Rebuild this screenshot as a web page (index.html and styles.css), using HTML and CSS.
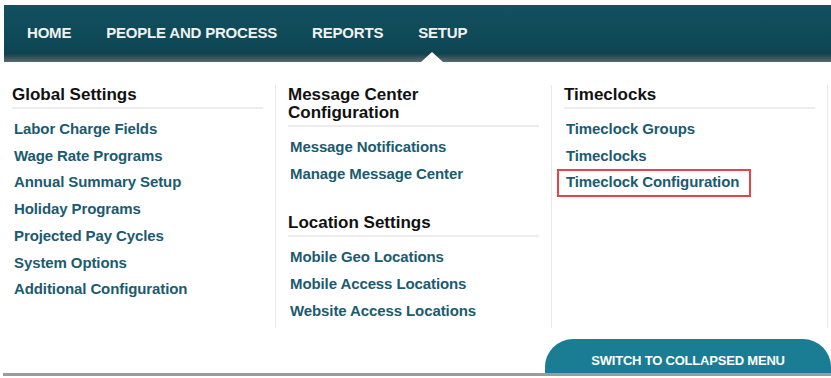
FILE: index.html
```html
<!DOCTYPE html>
<html lang="en">

<head>
    <meta charset="UTF-8">
    <meta name="viewport" content="width=device-width, initial-scale=1.0">
    <title>Setup menu</title>
    <link rel="stylesheet" href="styles.css">
</head>

<body>
    <div class="page">
        <nav class="topnav">
            <a class="navitem" href="#">HOME</a>
            <a class="navitem" href="#">PEOPLE AND PROCESS</a>
            <a class="navitem" href="#">REPORTS</a>
            <a class="navitem active" href="#">SETUP<span class="caret"></span></a>
        </nav>

        <div class="menu">
            <div class="col">
                <h3>Global Settings</h3>
                <ul>
                    <li><a href="#">Labor Charge Fields</a></li>
                    <li><a href="#">Wage Rate Programs</a></li>
                    <li><a href="#">Annual Summary Setup</a></li>
                    <li><a href="#">Holiday Programs</a></li>
                    <li><a href="#">Projected Pay Cycles</a></li>
                    <li><a href="#">System Options</a></li>
                    <li><a href="#">Additional Configuration</a></li>
                </ul>
            </div>
            <div class="col">
                <h3>Message Center<br>Configuration</h3>
                <ul>
                    <li><a href="#">Message Notifications</a></li>
                    <li><a href="#">Manage Message Center</a></li>
                </ul>
                <h3 class="next">Location Settings</h3>
                <ul>
                    <li><a href="#">Mobile Geo Locations</a></li>
                    <li><a href="#">Mobile Access Locations</a></li>
                    <li><a href="#">Website Access Locations</a></li>
                </ul>
            </div>
            <div class="col">
                <h3>Timeclocks</h3>
                <ul>
                    <li><a href="#">Timeclock Groups</a></li>
                    <li><a href="#">Timeclocks</a></li>
                    <li><a class="marked" href="#">Timeclock Configuration</a></li>
                </ul>
            </div>
        </div>

        <div class="footer">
            <button class="collapse">SWITCH TO COLLAPSED MENU</button>
        </div>
    </div>
</body>

</html>
```

FILE: styles.css
```css
* {
    margin: 0;
    padding: 0;
    box-sizing: border-box;
}

body {
    font-family: "Liberation Sans", Arial, sans-serif;
    background-color: #fff;
    overflow: hidden;
}

.page {
    padding-top: 5px;
}

/* top bar */
.topnav {
    display: flex;
    gap: 35px;
    height: 57px;
    margin-left: 4px;
    padding-left: 23px;
    background: linear-gradient(#125060 0%, #0f4957 60%, #0d4452 86%, #3b5559 93%, #586a6c 100%);
}

.navitem {
    position: relative;
    display: flex;
    align-items: center;
    padding-bottom: 2px;
    color: #f1f1f1;
    font-size: 15px;
    font-weight: bold;
    letter-spacing: -0.2px;
    text-decoration: none;
}

.caret {
    position: absolute;
    bottom: 0;
    left: 3px;
    width: 0;
    height: 0;
    border-left: 11px solid transparent;
    border-right: 11px solid transparent;
    border-bottom: 10px solid #fff;
}

/* dropdown columns */
.menu {
    display: grid;
    grid-template-columns: repeat(3, 276px);
    margin-top: 23px;
}

.col {
    padding: 0 12px 3px;
    border-right: 1px solid #e9e9e9;
}

.col h3 {
    font-size: 17px;
    line-height: 18px;
    font-weight: bold;
    color: #111;
    padding-top: 1px;
    padding-bottom: 3px;
    border-bottom: 2px solid #ececec;
}

.col h3.next {
    margin-top: 26px;
}

.col ul {
    list-style: none;
    padding-top: 7px;
}

.col li {
    line-height: 26.7px;
    padding-left: 2px;
}

.col li a {
    color: #1b5b6f;
    font-size: 15px;
    font-weight: bold;
    letter-spacing: -0.1px;
    text-decoration: none;
}

.marked {
    position: relative;
}

.marked::after {
    content: "";
    position: absolute;
    top: -4px;
    bottom: -7px;
    left: -9px;
    right: -12px;
    border: 2px solid #e5454a;
}

/* bottom strip */
.footer {
    display: flex;
    justify-content: flex-end;
    margin-top: 11px;
    margin-left: 3px;
    border-bottom: 3px solid #9b9b9b;
}

.collapse {
    width: 286px;
    height: 34px;
    padding-top: 11px;
    border: 0;
    border-radius: 28px 28px 0 0;
    background-color: #1b7d93;
    color: #fff;
    font-family: "Liberation Sans", Arial, sans-serif;
    font-size: 13px;
    line-height: 16px;
    font-weight: bold;
    letter-spacing: -0.2px;
    cursor: pointer;
}
```
